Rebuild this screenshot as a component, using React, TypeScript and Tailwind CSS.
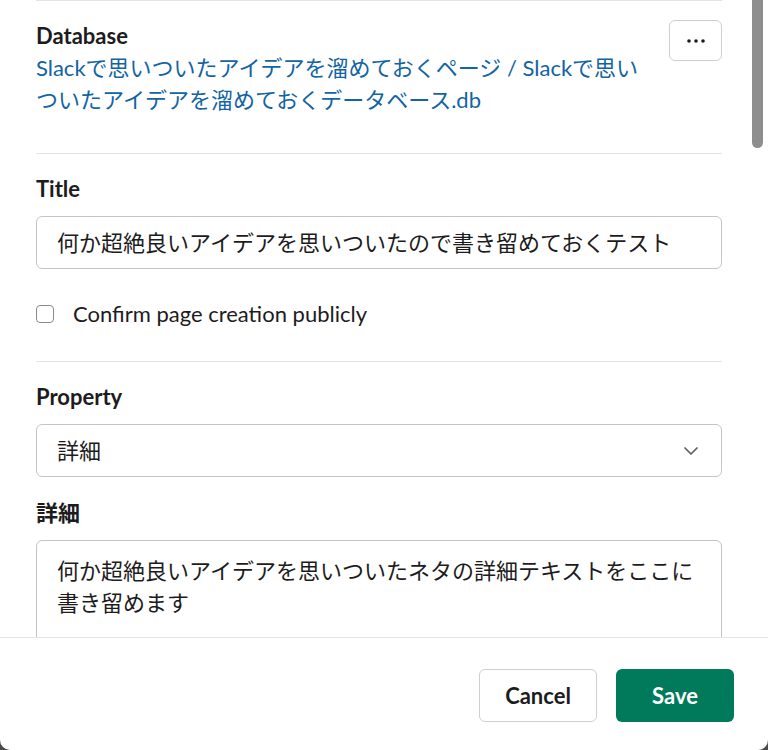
import { ChevronDown } from "lucide-react";

const font = { fontFamily: 'Lato, "Noto Sans CJK JP", sans-serif' };

function Divider() {
  return <div className="border-t border-[#e4e4e4]" />;
}

function Field({ children }: { children: React.ReactNode }) {
  return (
    <div className="flex h-[53px] items-center rounded-[6px] border border-[#c4c4c4] px-[20px] text-[22px] leading-[32px] text-[#1d1c1d]">
      {children}
    </div>
  );
}

export default function App() {
  return (
    <div className="h-[750px] w-[768px] bg-[#4a4a4a]" style={font}>
      <div className="flex h-full flex-col overflow-hidden rounded-b-[10px] bg-white">
        <div className="relative flex-1 overflow-hidden">
          <div className="pl-[36px] pr-[46px] text-[#1d1c1d]">
            <Divider />

            {/* Database */}
            <div className="flex gap-[22px] pt-[19px] pb-[37px]">
              <div className="flex-1">
                <div className="text-[22px] font-bold leading-[32px]">Database</div>
                <div className="text-[22px] leading-[32px] text-[#1264a3]">
                  Slackで思いついたアイデアを溜めておくページ / Slackで思いついたアイデアを溜めておくデータベース.db
                </div>
              </div>
              <button className="flex h-[41px] w-[53px] shrink-0 items-center justify-center rounded-[6px] border border-[#cfcfcf] bg-white">
                <svg width="18" height="4" viewBox="0 0 18 4" fill="#1d1c1d">
                  <circle cx="2" cy="2" r="1.8" />
                  <circle cx="9" cy="2" r="1.8" />
                  <circle cx="16" cy="2" r="1.8" />
                </svg>
              </button>
            </div>

            <Divider />

            {/* Title */}
            <div className="pt-[19px] pb-[31px]">
              <div className="text-[22px] font-bold leading-[32px]">Title</div>
              <div className="mt-[11px]">
                <Field>何か超絶良いアイデアを思いついたので書き留めておくテスト</Field>
              </div>
              <label className="mt-[29px] flex items-center gap-[19px] text-[22px] leading-[32px]">
                <span className="h-[18px] w-[18px] rounded-[4px] border-[1.5px] border-[#8a8a8a] bg-white" />
                Confirm page creation publicly
              </label>
            </div>

            <Divider />

            {/* Property */}
            <div className="pt-[19px]">
              <div className="text-[22px] font-bold leading-[32px]">Property</div>
              <div className="mt-[11px]">
                <Field>
                  <span className="flex-1">詳細</span>
                  <ChevronDown size={24} strokeWidth={1.75} className="mr-[-2px] text-[#616061]" />
                </Field>
              </div>
              <div className="mt-[20px] text-[22px] font-bold leading-[32px]">詳細</div>
              <div className="mt-[11px] h-[140px] rounded-[6px] border border-[#c4c4c4] px-[20px] pt-[14px] text-[22px] leading-[32px]">
                何か超絶良いアイデアを思いついたネタの詳細テキストをここに書き留めます
              </div>
            </div>
          </div>

          {/* scrollbar */}
          <div className="absolute right-[5px] top-0 h-[148px] w-[11px] rounded-b-full bg-[#8e8e8e]" />
        </div>

        <div className="flex h-[113px] shrink-0 items-start justify-end gap-[19px] border-t border-[#e4e4e4] pt-[31px] pr-[34px]">
          <button className="h-[53px] w-[118px] rounded-[6px] border border-[#cfcfcf] bg-white text-[22px] font-bold text-[#1d1c1d]">
            Cancel
          </button>
          <button className="h-[53px] w-[118px] rounded-[6px] bg-[#007a5a] text-[22px] font-bold text-white">
            Save
          </button>
        </div>
      </div>
    </div>
  );
}
